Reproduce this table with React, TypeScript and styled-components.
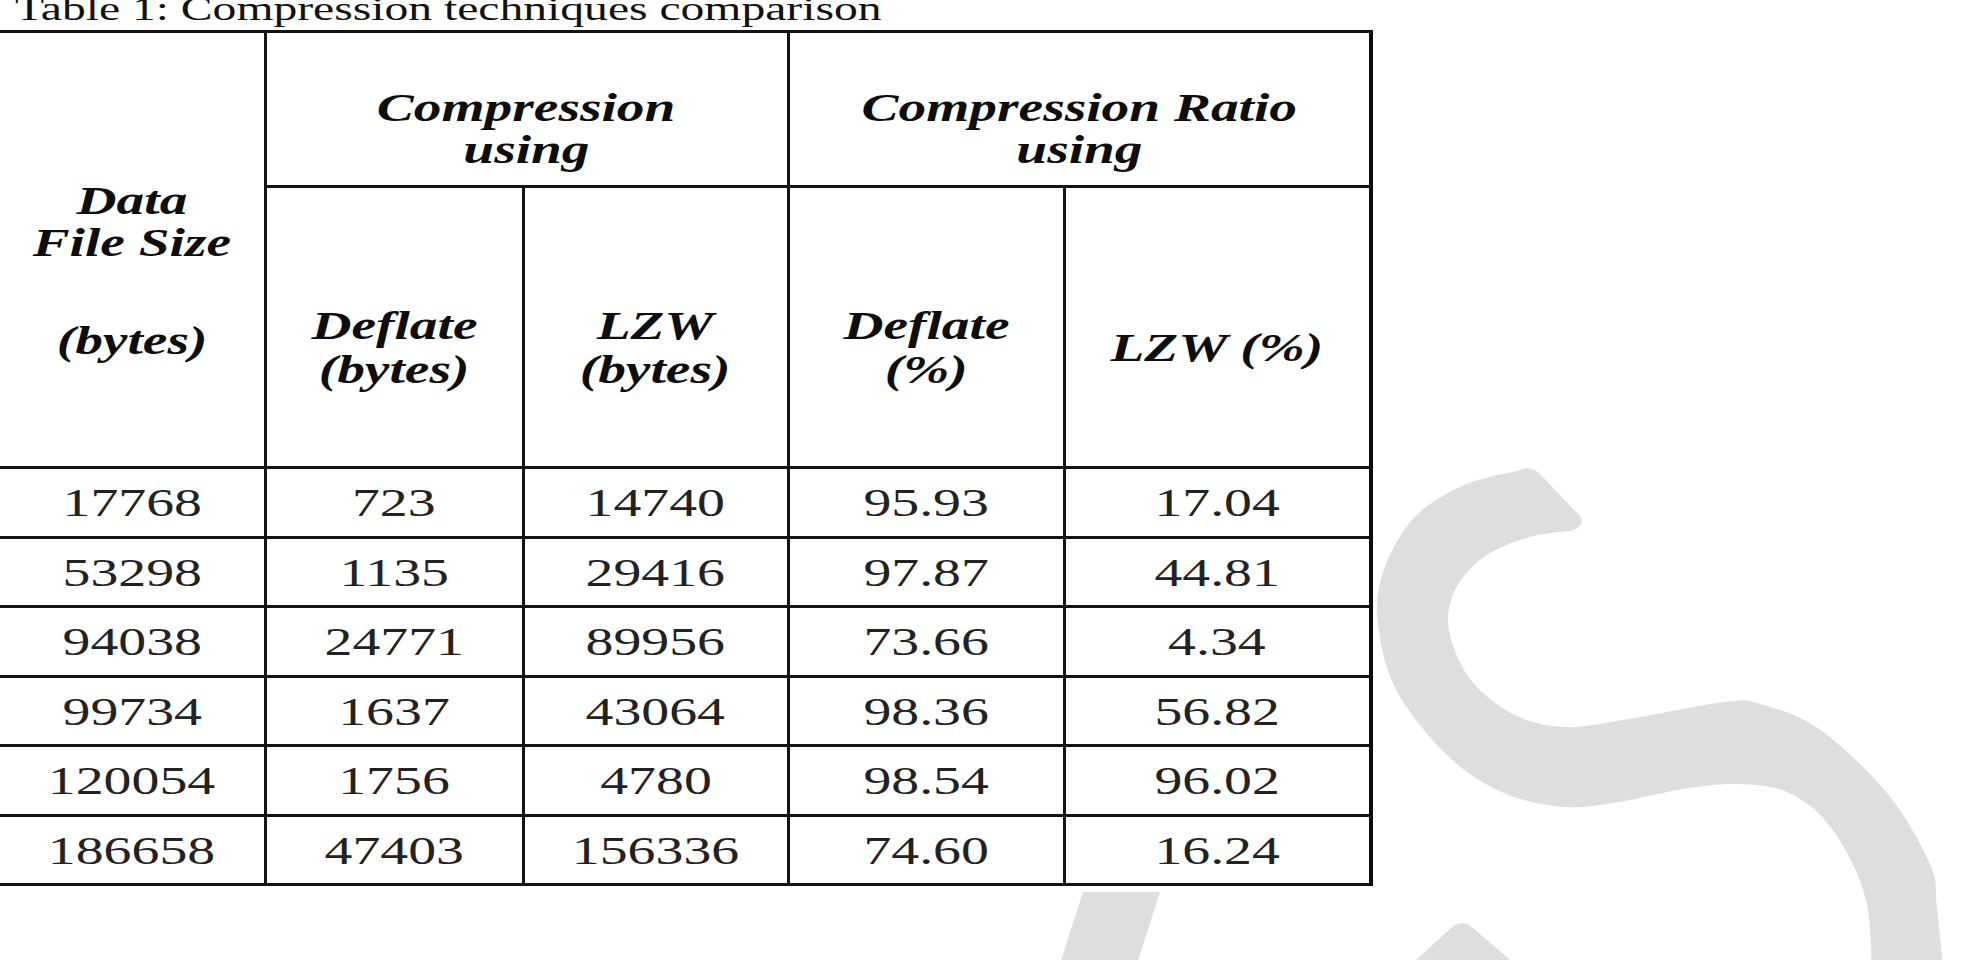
import React from "react";
import styled, { createGlobalStyle } from "styled-components";

type Pt = [number, number];

const rows: string[][] = [
  ["17768", "723", "14740", "95.93", "17.04"],
  ["53298", "1135", "29416", "97.87", "44.81"],
  ["94038", "24771", "89956", "73.66", "4.34"],
  ["99734", "1637", "43064", "98.36", "56.82"],
  ["120054", "1756", "4780", "98.54", "96.02"],
  ["186658", "47403", "156336", "74.60", "16.24"],
];

// catmull-rom through the points, assumes the pen already sits on pts[0]
const curve = (pts: Pt[]) => {
  let d = "";
  for (let i = 0; i < pts.length - 1; i++) {
    const p0 = pts[i - 1] || pts[i];
    const p1 = pts[i];
    const p2 = pts[i + 1];
    const p3 = pts[i + 2] || p2;
    const c1 = [p1[0] + (p2[0] - p0[0]) / 6, p1[1] + (p2[1] - p0[1]) / 6];
    const c2 = [p2[0] - (p3[0] - p1[0]) / 6, p2[1] - (p3[1] - p1[1]) / 6];
    d += ` C${c1[0]},${c1[1]} ${c2[0]},${c2[1]} ${p2[0]},${p2[1]}`;
  }
  return d;
};

const outer: Pt[] = [
  [1521, 470], [1462, 486], [1411, 521], [1381, 579], [1379, 632],
  [1398, 693], [1449, 757], [1504, 793], [1564, 807], [1619, 802],
  [1683, 789], [1738, 784], [1789, 793], [1832, 829], [1866, 900], [1872, 990],
];

const inner: Pt[] = [
  [1945, 990], [1937, 907], [1930, 864], [1887, 793], [1819, 729],
  [1760, 704], [1725, 702], [1623, 720], [1564, 727], [1513, 714],
  [1470, 679], [1449, 630], [1455, 590], [1485, 556], [1530, 537], [1570, 531],
];

const sPath =
  `M${outer[0][0]},${outer[0][1]}` +
  curve(outer) +
  ` L${inner[0][0]},${inner[0][1]}` +
  curve(inner) +
  " C1585,527 1584,517 1576,512 L1540,474 C1533,467 1525,468 1521,470 Z";

const GlobalStyle = createGlobalStyle`
  html, body {
    margin: 0;
    padding: 0;
    background: #ffffff;
    overflow: hidden;
  }
  body {
    font-family: "Liberation Serif", "Times New Roman", serif;
    color: #111;
  }
`;

const Page = styled.div`
  position: relative;
  width: 1967px;
  height: 960px;
  overflow: hidden;
  background: #fff;
`;

const Watermark = styled.svg`
  position: absolute;
  inset: 0;
  width: 1967px;
  height: 960px;
  pointer-events: none;
`;

const Content = styled.div`
  position: relative;
  display: flex;
  flex-direction: column;
`;

const TitleBar = styled.div`
  height: 30px;
  display: flow-root;
`;

const Title = styled.div`
  margin: -6px 0 0 15px;
  font-size: 34px;
  line-height: 30px;
  white-space: nowrap;
`;

// the scanned table is stretched sideways, so each text run is widened
const Stretch = styled.span<{ $k: number; $origin?: string }>`
  display: inline-block;
  white-space: nowrap;
  transform: scaleX(${({ $k }) => $k});
  transform-origin: ${({ $origin }) => $origin || "center"};
`;

const Table = styled.table`
  border-collapse: collapse;
  table-layout: fixed;
  width: 1371px;
`;

const Cell = styled.td<{ $pad?: number }>`
  border: 3px solid #141414;
  text-align: center;
  vertical-align: middle;
  padding: ${({ $pad }) => $pad || 0}px 0 0 0;
  &:first-child {
    border-left: none;
  }
  &:last-child {
    border-right: 4px solid #0c0c0c;
  }
`;

const HeadCell = styled(Cell)`
  font-weight: bold;
  font-style: italic;
  font-size: 39px;
  color: #0e0e0e;
`;

const HeadLine = styled.div<{ $h?: number; $gap?: number }>`
  line-height: ${({ $h }) => $h || 42}px;
  margin-top: ${({ $gap }) => $gap || 0}px;
`;

const DataRow = styled.tr`
  height: 69.5px;
`;

const DataCell = styled(Cell)`
  font-size: 41px;
  line-height: 46px;
  color: #222;
`;

const Line = ({ text, h, gap }: { text: string; h?: number; gap?: number }) => (
  <HeadLine $h={h} $gap={gap}>
    <Stretch $k={1.42}>{text}</Stretch>
  </HeadLine>
);

export default function App() {
  return (
    <>
      <GlobalStyle />
      <Page>
        <Watermark viewBox="0 0 1967 960">
          <path d={sPath} fill="#dedede" />
          <path d="M1405,970 L1450,929 Q1462,917 1474,929 L1522,970 Z" fill="#dedede" />
          <path d="M1058,970 L1083,892 L1160,892 L1135,970 Z" fill="#dedede" />
        </Watermark>
        <Content>
          <TitleBar>
            <Title>
              <Stretch $k={1.4} $origin="left">
                Table 1: Compression techniques comparison
              </Stretch>
            </Title>
          </TitleBar>
          <Table>
            <colgroup>
              <col style={{ width: 265 }} />
              <col style={{ width: 258 }} />
              <col style={{ width: 265 }} />
              <col style={{ width: 276 }} />
              <col style={{ width: 307 }} />
            </colgroup>
            <tbody>
              <tr style={{ height: 155 }}>
                <HeadCell rowSpan={2} $pad={42}>
                  <Line text="Data" />
                  <Line text="File Size" />
                  <Line text="(bytes)" gap={56} />
                </HeadCell>
                <HeadCell colSpan={2} $pad={40}>
                  <Line text="Compression" />
                  <Line text="using" />
                </HeadCell>
                <HeadCell colSpan={2} $pad={40}>
                  <Line text="Compression Ratio" />
                  <Line text="using" />
                </HeadCell>
              </tr>
              <tr style={{ height: 281 }}>
                <HeadCell $pad={42}>
                  <Line text="Deflate" h={44} />
                  <Line text="(bytes)" h={44} />
                </HeadCell>
                <HeadCell $pad={42}>
                  <Line text="LZW" h={44} />
                  <Line text="(bytes)" h={44} />
                </HeadCell>
                <HeadCell $pad={42}>
                  <Line text="Deflate" h={44} />
                  <Line text="(%)" h={44} />
                </HeadCell>
                <HeadCell $pad={42}>
                  <Line text="LZW (%)" h={44} />
                </HeadCell>
              </tr>
              {rows.map((row) => (
                <DataRow key={row[0]}>
                  {row.map((v, i) => (
                    <DataCell key={i}>
                      <Stretch $k={1.36}>{v}</Stretch>
                    </DataCell>
                  ))}
                </DataRow>
              ))}
            </tbody>
          </Table>
        </Content>
      </Page>
    </>
  );
}
